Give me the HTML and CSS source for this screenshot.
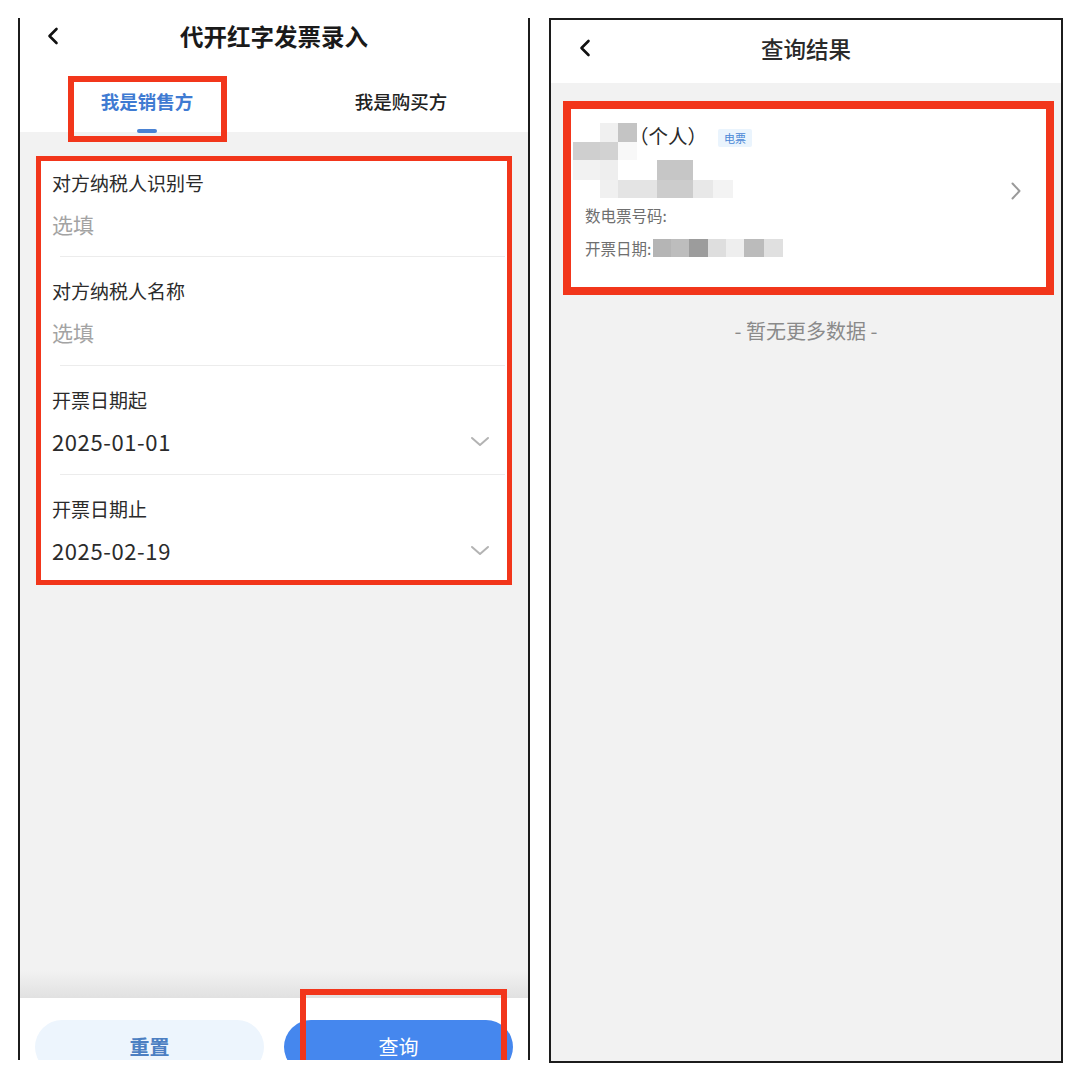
FILE: index.html
```html
<!DOCTYPE html>
<html lang="zh-CN">
<head>
<meta charset="utf-8">
<title>代开红字发票录入 / 查询结果</title>
<link rel="stylesheet" href="styles.css">
</head>
<body>
<div class="stage">
  <section class="phone phone-left">
    <header class="nav">
      <span class="nav-back"><svg width="12" height="18" viewBox="0 0 12 18"><path d="M9.5 2 L2.5 9 L9.5 16" fill="none" stroke="#111" stroke-width="2.6" stroke-linecap="round" stroke-linejoin="round"/></svg></span>
      <h1 class="nav-title title-bold">代开红字发票录入</h1>
      <span></span>
    </header>
    <div class="tabs">
      <div class="tab">
        <div class="tab-box mark">
          <span class="tab-text active">我是销售方</span>
          <span class="tab-line"></span>
        </div>
      </div>
      <div class="tab">
        <div class="tab-box">
          <span class="tab-text">我是购买方</span>
        </div>
      </div>
    </div>
    <main class="content">
      <form class="form-card">
        <div class="field field-first">
          <div class="field-label">对方纳税人识别号</div>
          <div class="field-value placeholder">选填</div>
        </div>
        <div class="field">
          <div class="field-label">对方纳税人名称</div>
          <div class="field-value placeholder">选填</div>
        </div>
        <div class="field">
          <div class="field-label">开票日期起</div>
          <div class="field-value">
            <span class="date">2025-01-01</span>
            <svg class="chev-down" width="20" height="11" viewBox="0 0 20 11"><path d="M2 2 L10 9 L18 2" fill="none" stroke="#b3b3b3" stroke-width="2" stroke-linecap="round" stroke-linejoin="round"/></svg>
          </div>
        </div>
        <div class="field field-last">
          <div class="field-label">开票日期止</div>
          <div class="field-value">
            <span class="date">2025-02-19</span>
            <svg class="chev-down" width="20" height="11" viewBox="0 0 20 11"><path d="M2 2 L10 9 L18 2" fill="none" stroke="#b3b3b3" stroke-width="2" stroke-linecap="round" stroke-linejoin="round"/></svg>
          </div>
        </div>
      </form>
    </main>
    <footer class="actions">
      <button class="btn btn-reset" type="button">重置</button>
      <button class="btn btn-query" type="button">查询</button>
      <span class="mark-query"></span>
    </footer>
  </section>

  <section class="phone phone-right">
    <header class="nav nav-right">
      <span class="nav-back"><svg width="12" height="18" viewBox="0 0 12 18"><path d="M9.5 2 L2.5 9 L9.5 16" fill="none" stroke="#111" stroke-width="2.6" stroke-linecap="round" stroke-linejoin="round"/></svg></span>
      <h1 class="nav-title title-medium">查询结果</h1>
      <span></span>
    </header>
    <main class="content-right">
      <div class="result-card">
        <div class="result-body">
          <div class="name-line">
            <svg class="mosaic mosaic-a" width="64" height="37" viewBox="0 0 64 37">
              <rect x="27" y="0" width="18" height="19" fill="#f0f0f0"/>
              <rect x="45" y="0" width="19" height="19" fill="#c4c4c4"/>
              <rect x="0" y="19" width="27" height="18" fill="#cfcfcf"/>
              <rect x="27" y="19" width="18" height="18" fill="#d2d2d2"/>
              <rect x="45" y="19" width="19" height="18" fill="#f8f8f8"/>
            </svg>
            <span class="name-text">（个人）</span>
            <span class="tag">电票</span>
          </div>
          <svg class="mosaic mosaic-b" width="160" height="38" viewBox="0 0 160 38">
            <rect x="0" y="0" width="27" height="20" fill="#f2f2f2"/>
            <rect x="27" y="0" width="18" height="20" fill="#eeeeee"/>
            <rect x="84" y="0" width="36" height="20" fill="#c6c6c6"/>
            <rect x="27" y="20" width="18" height="18" fill="#f0f0f0"/>
            <rect x="45" y="20" width="39" height="18" fill="#e4e4e4"/>
            <rect x="84" y="20" width="36" height="18" fill="#cccccc"/>
            <rect x="120" y="20" width="20" height="18" fill="#e8e8e8"/>
            <rect x="140" y="20" width="20" height="18" fill="#f3f3f3"/>
          </svg>
          <div class="info info-first">数电票号码:</div>
          <div class="info info-date">开票日期:<svg class="mosaic mosaic-date" width="130" height="18" viewBox="0 0 130 18">
              <rect x="0" y="0" width="18" height="18" fill="#b5b5b5"/>
              <rect x="18" y="0" width="18" height="18" fill="#bdbdbd"/>
              <rect x="36" y="0" width="19" height="18" fill="#9c9c9c"/>
              <rect x="55" y="0" width="18" height="18" fill="#dedede"/>
              <rect x="73" y="0" width="18" height="18" fill="#eeeeee"/>
              <rect x="91" y="0" width="20" height="18" fill="#bbbbbb"/>
              <rect x="111" y="0" width="19" height="18" fill="#e0e0e0"/>
            </svg></div>
        </div>
        <svg class="chev-right" width="12" height="20" viewBox="0 0 12 20"><path d="M2.5 2.5 L9.5 10 L2.5 17.5" fill="none" stroke="#9a9a9a" stroke-width="2" stroke-linecap="round" stroke-linejoin="round"/></svg>
      </div>
      <p class="no-more">- 暂无更多数据 -</p>
    </main>
  </section>
</div>
</body>
</html>
```

FILE: styles.css
```css
* {
  box-sizing: border-box;
}

html, body {
  margin: 0;
  padding: 0;
  background: #ffffff;
}

body {
  font-family: "Noto Sans CJK SC", "Noto Sans", sans-serif;
  color: #222;
  width: 1080px;
  height: 1080px;
  overflow: hidden;
}

.stage {
  display: flex;
  align-items: flex-start;
  gap: 19px;
  padding: 18px 0 0 18px;
}

.phone {
  display: flex;
  flex-direction: column;
  overflow: hidden;
  background: #fff;
}

.phone-left {
  width: 512px;
  height: 1042px;
  border-left: 2px solid #1c1c1c;
  border-right: 2px solid #1c1c1c;
}

.phone-right {
  width: 514px;
  height: 1045px;
  border: 2px solid #1c1c1c;
}

/* ---------- nav ---------- */
.nav {
  display: grid;
  grid-template-columns: 1fr auto 1fr;
  align-items: center;
  height: 36px;
  background: #fff;
}

.nav-back {
  display: flex;
  align-items: center;
  padding-left: 27px;
}

.nav-title {
  margin: 0;
  font-size: 23.5px;
  line-height: 36px;
  color: #1a1a1a;
}

.title-bold {
  font-weight: 700;
}

.title-medium {
  font-weight: 500;
  font-size: 22.5px;
  color: #2a2a2a;
}

.nav-right {
  height: 63px;
  align-items: start;
  padding-top: 10px;
}

.nav-right .nav-back {
  height: 36px;
  padding-left: 28px;
}

/* ---------- tabs ---------- */
.tabs {
  display: flex;
  height: 78px;
  background: #fff;
}

.tab {
  flex: 1;
  display: flex;
  justify-content: center;
  padding-top: 22px;
}

.tab-box {
  width: 159px;
  height: 66px;
  border: 6px solid transparent;
  display: flex;
  flex-direction: column;
  align-items: center;
  padding-top: 7px;
}

.mark {
  border-color: #f2361b;
  position: relative;
  z-index: 2;
}

.tab-text {
  font-size: 18.5px;
  line-height: 24px;
  font-weight: 500;
  color: #222;
}

.tab-text.active {
  color: #3f7bd2;
  font-weight: 700;
}

.tab-line {
  width: 20px;
  height: 4px;
  border-radius: 2px;
  background: #4a82d3;
  margin-top: 16px;
}

/* ---------- form ---------- */
.content {
  flex: 1;
  padding: 24px 16px 0 16px;
  background: linear-gradient(180deg, #f2f2f2 0, #f2f2f2 calc(100% - 28px), #e1e1e1 100%);
}

.form-card {
  margin: 0;
  background: #fff;
  border: 5px solid #f2361b;
}

.field {
  padding: 22px 17px 19px 11px;
  background: linear-gradient(#ececec, #ececec) no-repeat 19px 100% / calc(100% - 21px) 1px;
}

.field-first {
  padding-top: 10px;
  padding-bottom: 18px;
}

.field-last {
  padding-bottom: 15px;
  background: none;
}

.field-label {
  font-size: 19px;
  line-height: 24px;
  color: #2b2b2b;
}

.field-value {
  margin-top: 14px;
  font-size: 22px;
  line-height: 30px;
  color: #2b2b2b;
  display: flex;
  align-items: center;
  justify-content: space-between;
}

.date {
  letter-spacing: 0.6px;
}

.field-value.placeholder {
  font-size: 21px;
  color: #a3a3a3;
}

.chev-down {
  display: block;
}

/* ---------- actions ---------- */
.actions {
  position: relative;
  display: flex;
  gap: 20px;
  height: 62px;
  padding: 22px 15px 0 15px;
  background: #fff;
}

.btn {
  flex: 1;
  height: 54px;
  border: none;
  border-radius: 27px;
  font-family: "Noto Sans CJK SC", "Noto Sans", sans-serif;
  font-size: 20px;
  line-height: 54px;
  padding: 0;
}

.btn-reset {
  background: #edf5fd;
  color: #4c7fc2;
  font-weight: 700;
}

.btn-query {
  background: #4587ee;
  color: #fff;
}

.mark-query {
  position: absolute;
  left: 280px;
  top: -9px;
  width: 207px;
  height: 90px;
  border: 6px solid #f2361b;
  border-bottom: none;
}

/* ---------- right panel ---------- */
.content-right {
  flex: 1;
  background: #f2f2f2;
  padding-top: 18px;
}

.result-card {
  margin: 0 7px 0 12px;
  border: 8px solid #f2361b;
  background: #fff;
  display: flex;
  align-items: center;
  padding: 14px 24px 28px 14px;
}

.result-body {
  flex: 1;
  display: flex;
  flex-direction: column;
  align-items: flex-start;
}

.mosaic {
  display: block;
}

.mosaic-a,
.mosaic-b {
  margin-left: -12px;
}

.name-line {
  display: flex;
  align-items: flex-start;
  height: 37px;
}

.name-text {
  font-size: 19.5px;
  line-height: 26px;
  color: #2a2a2a;
  margin-left: -8px;
}

.tag {
  margin-left: 11px;
  margin-top: 6px;
  height: 18px;
  padding: 0 6px;
  font-size: 11px;
  line-height: 18px;
  color: #4a88d6;
  background: #eaf4fd;
  border-radius: 2px;
}

.info {
  font-size: 15.5px;
  line-height: 22px;
  color: #6f6f6f;
  display: flex;
  align-items: center;
}

.info-first {
  margin-top: 6px;
}

.info-date {
  margin-top: 11px;
}

.mosaic-date {
  margin-left: 2px;
}

.chev-right {
  display: block;
  flex: none;
}

.no-more {
  margin: 21px 0 0 0;
  text-align: center;
  font-size: 20px;
  line-height: 30px;
  color: #8a8a8a;
}
```
